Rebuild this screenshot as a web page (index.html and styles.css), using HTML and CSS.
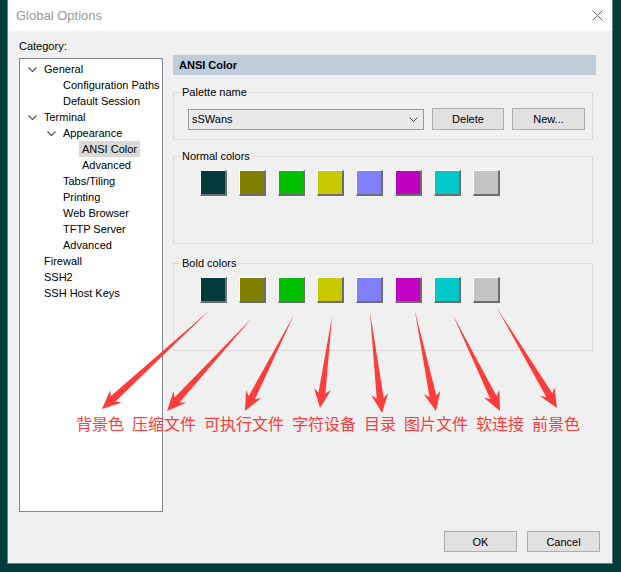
FILE: index.html
```html
<!DOCTYPE html>
<html lang="en">
<head>
<meta charset="utf-8">
<title>Global Options</title>
<link rel="stylesheet" href="styles.css">
</head>
<body>
<div class="stage">
  <div class="window">
    <div class="titlebar">
      <span class="title">Global Options</span>
      <svg class="close" width="11" height="11" viewBox="0 0 11 11"><path d="M0.5 0.5 L10.5 10.5 M10.5 0.5 L0.5 10.5" stroke="#6f6f6f" stroke-width="1" fill="none"/></svg>
    </div>
    <div class="main">
      <div class="left">
        <div class="cat-label">Category:</div>
        <div class="tree">
          <div class="row"><span class="tw"><svg width="9" height="5" viewBox="0 0 9 5"><path d="M0.5 0.5 L4.5 4.5 L8.5 0.5" stroke="#555" stroke-width="1.2" fill="none"/></svg></span><span class="label">General</span></div>
          <div class="row l1"><span class="tw"></span><span class="label">Configuration Paths</span></div>
          <div class="row l1"><span class="tw"></span><span class="label">Default Session</span></div>
          <div class="row"><span class="tw"><svg width="9" height="5" viewBox="0 0 9 5"><path d="M0.5 0.5 L4.5 4.5 L8.5 0.5" stroke="#555" stroke-width="1.2" fill="none"/></svg></span><span class="label">Terminal</span></div>
          <div class="row l1"><span class="tw"><svg width="9" height="5" viewBox="0 0 9 5"><path d="M0.5 0.5 L4.5 4.5 L8.5 0.5" stroke="#555" stroke-width="1.2" fill="none"/></svg></span><span class="label">Appearance</span></div>
          <div class="row l2"><span class="tw"></span><span class="label sel">ANSI Color</span></div>
          <div class="row l2"><span class="tw"></span><span class="label">Advanced</span></div>
          <div class="row l1"><span class="tw"></span><span class="label">Tabs/Tiling</span></div>
          <div class="row l1"><span class="tw"></span><span class="label">Printing</span></div>
          <div class="row l1"><span class="tw"></span><span class="label">Web Browser</span></div>
          <div class="row l1"><span class="tw"></span><span class="label">TFTP Server</span></div>
          <div class="row l1"><span class="tw"></span><span class="label">Advanced</span></div>
          <div class="row"><span class="tw"></span><span class="label">Firewall</span></div>
          <div class="row"><span class="tw"></span><span class="label">SSH2</span></div>
          <div class="row"><span class="tw"></span><span class="label">SSH Host Keys</span></div>
        </div>
      </div>
      <div class="right">
        <div class="header">ANSI Color</div>
        <fieldset class="group g-palette">
          <legend>Palette name</legend>
          <div class="palette-row">
            <div class="combo"><span>sSWans</span><svg width="9" height="5" viewBox="0 0 9 5"><path d="M0.5 0.5 L4.5 4.5 L8.5 0.5" stroke="#444" stroke-width="1" fill="none"/></svg></div>
            <div class="btn">Delete</div>
            <div class="btn wide">New...</div>
          </div>
        </fieldset>
        <fieldset class="group g-normal">
          <legend>Normal colors</legend>
          <div class="swatches">
            <div class="sw c0"></div><div class="sw c1"></div><div class="sw c2"></div><div class="sw c3"></div>
            <div class="sw c4"></div><div class="sw c5"></div><div class="sw c6"></div><div class="sw c7"></div>
          </div>
        </fieldset>
        <fieldset class="group g-bold">
          <legend>Bold colors</legend>
          <div class="swatches">
            <div class="sw c0"></div><div class="sw c1"></div><div class="sw c2"></div><div class="sw c3"></div>
            <div class="sw c4"></div><div class="sw c5"></div><div class="sw c6"></div><div class="sw c7"></div>
          </div>
        </fieldset>
      </div>
    </div>
    <div class="footer">
      <div class="btn fbtn">OK</div>
      <div class="btn fbtn">Cancel</div>
    </div>
  </div>

  <div class="annot">
    <svg class="arrows" width="621" height="572" viewBox="0 0 621 572">
      <g fill="#ff3c3c">
        <path transform="translate(102 409) rotate(137.5)" d="M0 0 L-19 -8.5 L-15 -3.5 L-146 0 L-15 3.5 L-19 8.5 Z"/>
        <path transform="translate(167 411) rotate(132.4)" d="M0 0 L-19 -8.5 L-15 -3.5 L-126 0 L-15 3.5 L-19 8.5 Z"/>
        <path transform="translate(245 411) rotate(117)" d="M0 0 L-19 -8.5 L-15 -3.5 L-108 0 L-15 3.5 L-19 8.5 Z"/>
        <path transform="translate(320 408) rotate(97.5)" d="M0 0 L-19 -8.5 L-15 -3.5 L-92 0 L-15 3.5 L-19 8.5 Z"/>
        <path transform="translate(382 413) rotate(83.2)" d="M0 0 L-19 -8.5 L-15 -3.5 L-102 0 L-15 3.5 L-19 8.5 Z"/>
        <path transform="translate(436 411) rotate(78.1)" d="M0 0 L-19 -8.5 L-15 -3.5 L-102 0 L-15 3.5 L-19 8.5 Z"/>
        <path transform="translate(500 411) rotate(63.9)" d="M0 0 L-19 -8.5 L-15 -3.5 L-107 0 L-15 3.5 L-19 8.5 Z"/>
        <path transform="translate(557 408) rotate(59)" d="M0 0 L-19 -8.5 L-15 -3.5 L-117 0 L-15 3.5 L-19 8.5 Z"/>
      </g>
    </svg>
    <div class="labels">
      <span>背景色</span><span>压缩文件</span><span>可执行文件</span><span>字符设备</span><span>目录</span><span>图片文件</span><span>软连接</span><span>前景色</span>
    </div>
  </div>
</div>
</body>
</html>
```

FILE: styles.css
```css
* { box-sizing: border-box; }
html, body { margin: 0; padding: 0; }
body {
  background: #003c3a;
  font-family: "Liberation Sans", Arial, sans-serif;
  font-size: 11px;
  color: #000;
}
.stage {
  position: relative;
  width: 621px;
  height: 572px;
  overflow: hidden;
}
.window {
  margin-left: 7px;
  width: 606px;
  height: 564px;
  background: #f0f0f0;
  border: 1px solid #6e7f7e;
  border-top: none;
  display: flex;
  flex-direction: column;
}
.titlebar {
  height: 31px;
  flex: none;
  background: #fff;
  display: flex;
  align-items: center;
  justify-content: space-between;
  padding: 0 9px 0 8px;
}
.title {
  font-size: 13px;
  color: #999;
}
.close { display: block; }

.main {
  display: flex;
  padding: 9px 0 0 11px;
}
.left { width: 144px; flex: none; }
.cat-label { height: 13px; line-height: 13px; margin-bottom: 5px; }
.tree {
  height: 454px;
  background: #fff;
  border: 1px solid #828790;
  padding-top: 2px;
}
.row {
  height: 16px;
  display: flex;
  align-items: center;
  white-space: nowrap;
}
.row.l1 { padding-left: 19px; }
.row.l2 { padding-left: 38px; }
.tw {
  width: 24px;
  flex: none;
  display: flex;
  justify-content: center;
  align-items: center;
}
.tw svg { display: block; }
.label { line-height: 16px; }
.label.sel {
  background: #d9d9d9;
  margin-left: -3px;
  padding: 0 3px;
}

.right {
  margin-left: 10px;
  padding-top: 15px;
  width: 423px;
  flex: none;
}
.header {
  height: 20px;
  background: #bfcddb;
  font-weight: bold;
  padding-left: 6px;
  display: flex;
  align-items: center;
}
.group {
  width: 420px;
  margin: 10px 0 0 0;
  padding: 0;
  border: 1px solid #dcdcdc;
  min-width: 0;
}
.group legend {
  margin-left: 6px;
  padding: 0 2px;
  line-height: 13px;
}
.g-palette { margin-top: 11px; }
.g-bold { margin-top: 13px; }
.palette-row {
  display: flex;
  align-items: center;
  padding: 9px 0 9px 14px;
}
.combo {
  width: 236px;
  height: 21px;
  border: 1px solid #9a9a9a;
  background: #eaeaea;
  display: flex;
  align-items: center;
  justify-content: space-between;
  padding: 0 5px 0 3px;
}
.combo svg { display: block; }
.btn {
  width: 72px;
  height: 22px;
  border: 1px solid #adadad;
  background: #e1e1e1;
  display: flex;
  align-items: center;
  justify-content: center;
  margin-left: 8px;
  flex: none;
}
.btn.wide { width: 73px; }

.swatches {
  display: flex;
  gap: 12px;
  padding: 7px 0 47px 26px;
}
.sw {
  width: 27px;
  height: 26px;
  border-style: solid;
  border-width: 1px 2px 2px 1px;
  border-color: #ffffff #6d6d6d #6d6d6d #ffffff;
}
.c0 { background: #003c3c; }
.c1 { background: #808000; }
.c2 { background: #00c000; }
.c3 { background: #c8c800; }
.c4 { background: #8080ff; }
.c5 { background: #c000c0; }
.c6 { background: #00c8c8; }
.c7 { background: #c4c4c4; }

.footer {
  margin-top: auto;
  display: flex;
  justify-content: flex-end;
  gap: 10px;
  padding: 0 12px 11px 0;
}
.btn.fbtn { width: 73px; height: 21px; margin: 0; }

.annot {
  position: absolute;
  left: 0;
  top: 0;
  width: 621px;
  height: 572px;
  pointer-events: none;
}
.arrows { position: absolute; left: 0; top: 0; }
.labels {
  position: absolute;
  left: 76px;
  top: 415px;
  display: flex;
  gap: 8px;
  font-family: "Noto Sans CJK SC", sans-serif;
  font-size: 16px;
  line-height: 16px;
  color: #ff3b3b;
  white-space: nowrap;
}
```
